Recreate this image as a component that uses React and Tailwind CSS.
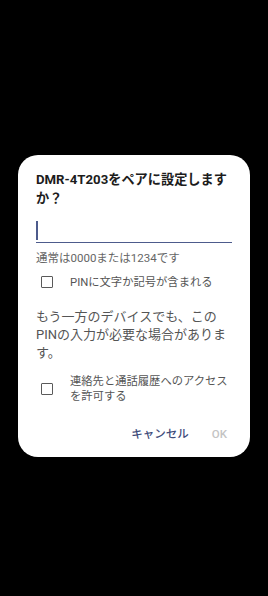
const font = { fontFamily: 'Roboto, "Noto Sans CJK JP", "Noto Sans", sans-serif' };

function CheckRow({ children, className = "" }) {
    return (
        <div className={`flex items-center ${className}`}>
            <div className="ml-[5px] w-[12px] h-[12px] border-[1.5px] border-[#5a5a5a] rounded-[1px] shrink-0" />
            <div className="ml-[17px] text-[11.3px] leading-[15px] text-[#555]">{children}</div>
        </div>
    );
}

export default function App() {
    return (
        <div className="w-[268px] h-[596px] bg-black overflow-hidden" style={font}>
            <div className="ml-[18px] mt-[155px] w-[232px] bg-white rounded-[20px] px-[18px] pt-[15px] pb-[15px]">
                <h2 className="text-[13.2px] leading-[19px] font-bold text-[#1c1c1c]">
                    DMR-4T203をペアに設定しますか？
                </h2>

                {/* PIN入力 */}
                <div className="mt-[11px] h-[24px] border-b-[1.5px] border-[#4d5b8c] flex">
                    <div className="mt-[2px] w-[1.5px] h-[19px] bg-[#4d5b8c]" />
                </div>
                <p className="mt-[7px] text-[11.5px] leading-[16px] text-[#666]">通常は0000または1234です</p>

                <CheckRow className="mt-[6px] h-[20px]">PINに文字か記号が含まれる</CheckRow>

                <p className="mt-[16px] text-[13px] leading-[18px] text-[#555]">
                    もう一方のデバイスでも、このPINの入力が必要な場合があります。
                </p>

                <CheckRow className="mt-[12px]">連絡先と通話履歴へのアクセスを許可する</CheckRow>

                <div className="mt-[22px] flex justify-end items-center gap-[23px] pr-[5px] text-[11.5px] leading-[16px] font-medium">
                    <span className="text-[#3e4b7a]">キャンセル</span>
                    <span className="text-[#c4c4c4]">OK</span>
                </div>
            </div>
        </div>
    );
}
